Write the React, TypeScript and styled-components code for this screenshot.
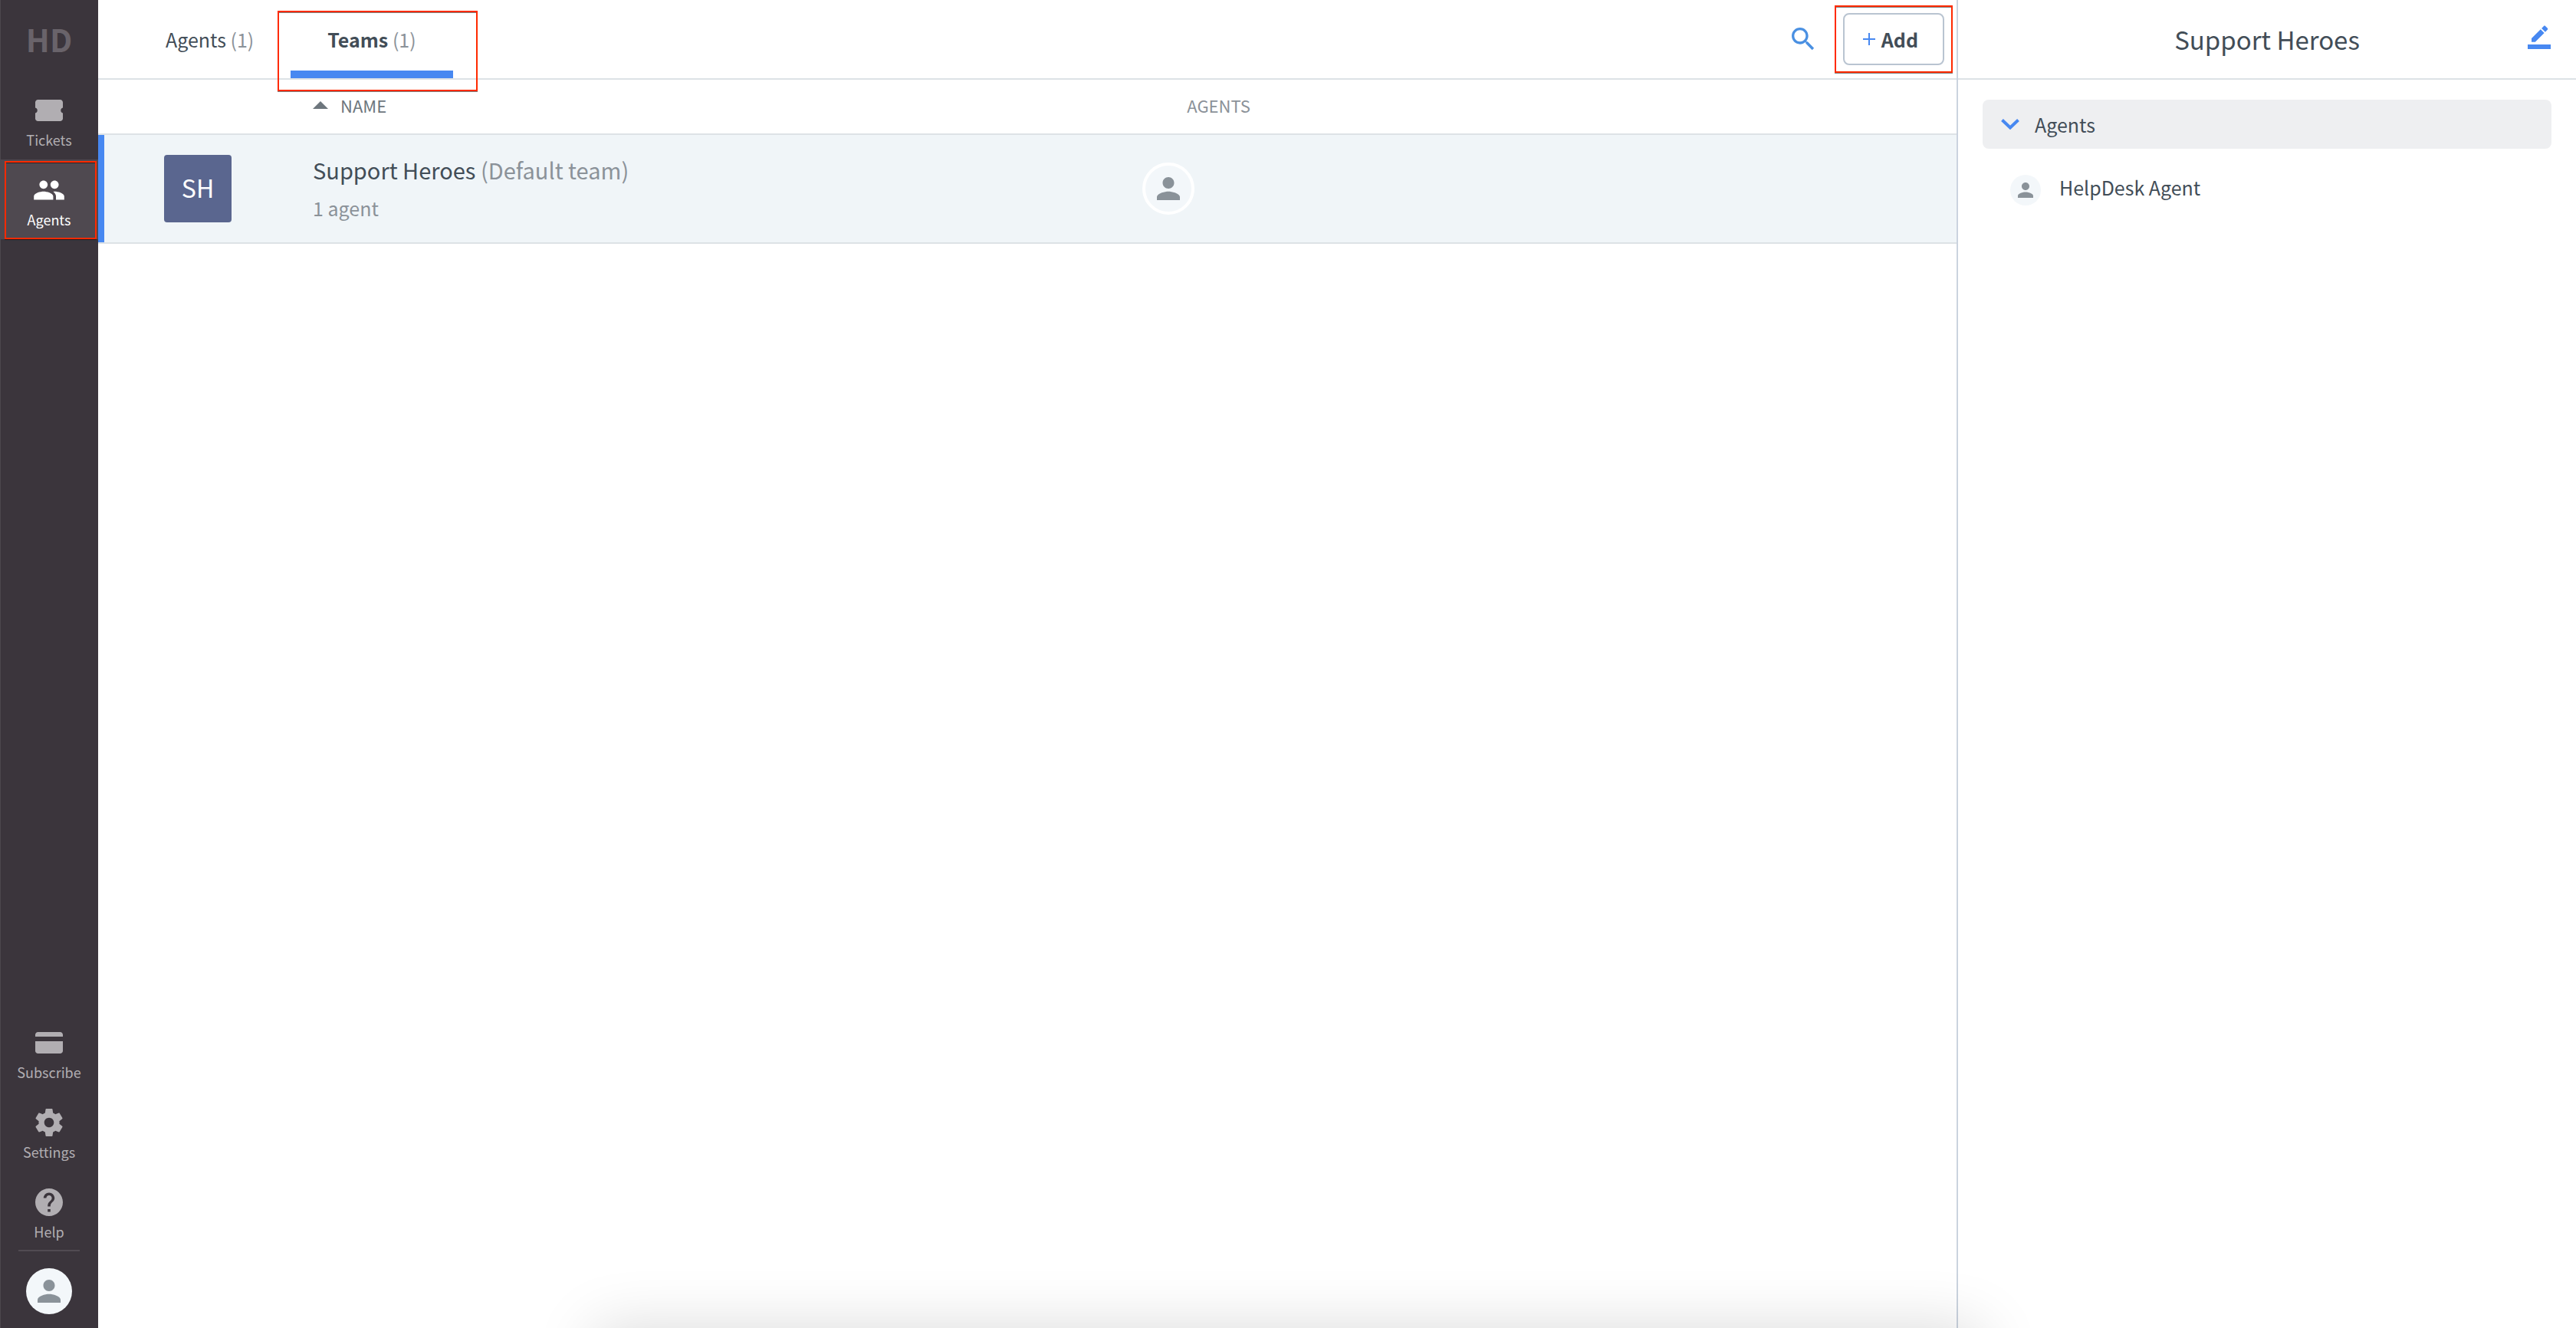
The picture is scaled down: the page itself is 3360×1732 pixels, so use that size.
import React from 'react';
import styled, { createGlobalStyle, css } from 'styled-components';

const color = {
  ink: '#424d57',
  muted: '#8b9299',
  line: '#dde2e6',
  blue: '#4788f1',
  side: '#3b353c',
  sideActive: '#4f4950',
  sideText: '#b1aeb2',
  red: '#ff2a00',
};

const GlobalStyle = createGlobalStyle`
  *, *::before, *::after { box-sizing: border-box; }
  body {
    margin: 0;
    background: #fff;
    color: ${color.ink};
    font-family: "Noto Sans CJK SC", "Noto Sans", sans-serif;
    font-size: 25px;
    line-height: 36px;
  }
  button { border: 0; padding: 0; background: none; font: inherit; color: inherit; cursor: pointer; }
  a { color: inherit; text-decoration: none; }
  svg { display: block; flex: none; }
  h1, p, ul { margin: 0; padding: 0; font-weight: 400; list-style: none; }
`;

const Shell = styled.div`
  display: flex;
  min-height: 100vh;
`;

const Sidebar = styled.nav`
  flex: 0 0 128px;
  display: flex;
  flex-direction: column;
  align-items: stretch;
  background: ${color.side};
  box-shadow: inset 1px 0 0 #4c474d;
  color: ${color.sideText};
`;

const Logo = styled.div`
  height: 104px;
  padding-bottom: 4px;
  display: flex;
  align-items: center;
  justify-content: center;
  color: #69636a;
  font-size: 41px;
  font-weight: 700;
`;

const NavItem = styled.a<{ $active?: boolean }>`
  position: relative;
  display: flex;
  flex-direction: column;
  align-items: center;
  gap: 6px;
  padding: 20px 0 14px;
  font-size: 18px;
  line-height: 24px;
  ${(p) => p.$active && css`
    background: ${color.sideActive};
    color: #fff;
  `}
`;

const Spacer = styled.div`
  flex: 1;
`;

const Divider = styled.hr`
  width: 80px;
  height: 2px;
  margin: -2px auto 22px;
  border: 0;
  background: #514b52;
`;

const Highlight = styled.span<{ $top: number; $right: number; $bottom: number; $left: number }>`
  position: absolute;
  top: ${(p) => p.$top}px;
  right: ${(p) => p.$right}px;
  bottom: ${(p) => p.$bottom}px;
  left: ${(p) => p.$left}px;
  border: 2px solid ${color.red};
  box-shadow: 0 1px 0 rgba(0, 0, 0, 0.5), inset 0 1px 0 rgba(0, 0, 0, 0.5);
  pointer-events: none;
`;

const Avatar = styled.span<{ $size: number; $ring?: boolean }>`
  display: flex;
  align-items: center;
  justify-content: center;
  flex: none;
  width: ${(p) => p.$size}px;
  height: ${(p) => p.$size}px;
  border: ${(p) => (p.$ring ? '4px solid #fff' : '0')};
  border-radius: 50%;
  background: #f3f7fa;
  color: #8a9299;
`;

const AccountButton = styled.button`
  align-self: center;
  margin-bottom: 18px;
`;

const Main = styled.main`
  flex: 1;
  min-width: 0;
`;

const TopBar = styled.header`
  display: flex;
  align-items: stretch;
  height: 104px;
  padding: 0 16px 0 40px;
  border-bottom: 2px solid ${color.line};
`;

const Tab = styled.button<{ $active?: boolean }>`
  position: relative;
  padding: 0 48px;
  font-weight: ${(p) => (p.$active ? 700 : 400)};
  ${(p) => p.$active && css`box-shadow: inset 0 -10px 0 ${color.blue};`}
`;

const Muted = styled.span`
  color: ${color.muted};
  font-weight: 400;
`;

const Actions = styled.div`
  display: flex;
  align-items: center;
  gap: 32px;
  margin-left: auto;
`;

const IconButton = styled.button<{ $color: string }>`
  color: ${(p) => p.$color};
`;

const AddButton = styled.button`
  position: relative;
  display: flex;
  align-items: center;
  gap: 8px;
  height: 68px;
  padding: 0 32px 0 24px;
  border: 2px solid #b9c4d1;
  border-radius: 8px;
  font-weight: 700;
`;

const TeamTable = styled.table`
  width: 100%;
  table-layout: fixed;
  border-collapse: separate;
  border-spacing: 0;
  text-align: left;
`;

const IconCol = styled.col`
  width: 280px;
`;

const AgentsCol = styled.col`
  width: 43.8%;
`;

const HeadCell = styled.th<{ $inset?: boolean }>`
  height: 72px;
  padding: 0 0 4px ${(p) => (p.$inset ? 58 : 0)}px;
  border-bottom: 2px solid ${color.line};
  color: ${(p) => (p.$inset ? color.muted : '#6d767d')};
  font-size: 22px;
  font-weight: 400;
  line-height: 32px;
`;

const SortButton = styled.button`
  display: flex;
  align-items: center;
  gap: 16px;
`;

const Cell = styled.td<{ $marked?: boolean }>`
  height: 142px;
  padding: 0;
  border-bottom: 2px solid ${color.line};
  background: #f0f5f8;
  ${(p) => p.$marked && css`
    padding-left: 86px;
    box-shadow: inset 8px 0 0 ${color.blue};
  `}
`;

const TeamBadge = styled.span`
  display: flex;
  align-items: center;
  justify-content: center;
  width: 88px;
  height: 88px;
  padding-bottom: 4px;
  border-radius: 4px;
  background: #5a668f;
  color: #fff;
  font-size: 32px;
`;

const TeamInfo = styled.div`
  display: grid;
  gap: 4px;
  line-height: 46px;
`;

const TeamName = styled.p`
  font-size: 29px;
`;

const TeamMeta = styled.p`
  color: ${color.muted};
`;

const Panel = styled.aside`
  flex: 0 0 808px;
  border-left: 2px solid #cbd3df;
`;

const PanelHead = styled.header`
  display: grid;
  grid-template-columns: 40px 1fr 40px;
  align-items: center;
  height: 104px;
  padding: 0 28px;
  border-bottom: 2px solid ${color.line};
  text-align: center;
`;

const PanelTitle = styled.h1`
  grid-column: 2;
  font-size: 33px;
  line-height: 48px;
`;

const PanelBody = styled.section`
  padding: 26px 32px;
`;

const SectionToggle = styled.button`
  display: flex;
  align-items: center;
  gap: 20px;
  width: 100%;
  height: 64px;
  padding: 0 24px;
  border-radius: 8px;
  background: #eeeff1;
`;

const AgentItem = styled.li`
  display: flex;
  align-items: center;
  gap: 24px;
  padding: 34px 36px;
`;

const AgentName = styled.span`
  padding-bottom: 8px;
  line-height: 32px;
`;

const DockShadow = styled.div`
  position: fixed;
  top: 100%;
  left: 776px;
  right: 776px;
  height: 200px;
  box-shadow: 0 0 80px rgba(0, 0, 0, 0.15);
  pointer-events: none;
`;

const NavIcon = ({ d }: { d: string }) => (
  <svg width="40" height="40" viewBox="0.889 0.889 22.222 22.222" fill="currentColor" aria-hidden="true">
    <path fillRule="evenodd" d={d} />
  </svg>
);

const PersonIcon = ({ size }: { size: number }) => (
  <svg width={size} height={size} viewBox="4 4 16 16" fill="currentColor" aria-hidden="true">
    <path d="M12 12c2.21 0 4-1.79 4-4s-1.79-4-4-4-4 1.79-4 4 1.79 4 4 4zm0 2c-2.67 0-8 1.34-8 4v2h16v-2c0-2.66-5.33-4-8-4z" />
  </svg>
);

const paths = {
  ticket:
    'M4 4.2h16c1.1 0 2 .9 2 2v3.9a1.95 1.95 0 0 0 0 3.8v3.9c0 1.1-.9 2-2 2H4c-1.1 0-2-.9-2-2v-3.9a1.95 1.95 0 0 0 0-3.8V6.2c0-1.1.9-2 2-2z',
  agents:
    'M16 11c1.66 0 2.99-1.34 2.99-3S17.66 5 16 5s-3 1.34-3 3 1.34 3 3 3zm-8 0c1.66 0 2.99-1.34 2.99-3S9.66 5 8 5 5 6.34 5 8s1.34 3 3 3zm0 2c-2.33 0-7 1.17-7 3.5V19h14v-2.5c0-2.33-4.67-3.5-7-3.5zm8 0c-.29 0-.62.02-.97.05 1.16.84 1.97 1.97 1.97 3.45V19h6v-2.5c0-2.33-4.67-3.5-7-3.5z',
  card:
    'M4 4.2h16c1.1 0 2 .9 2 2v1.3H2V6.2c0-1.1.9-2 2-2zM2 10.9h20v6.9c0 1.1-.9 2-2 2H4c-1.1 0-2-.9-2-2z',
  gear:
    'M19.43 12.98c.04-.32.07-.64.07-.98s-.03-.66-.07-.98l2.11-1.65c.19-.15.24-.42.12-.64l-2-3.46c-.12-.22-.39-.3-.61-.22l-2.49 1c-.52-.4-1.08-.73-1.69-.98l-.38-2.65C14.46 2.18 14.25 2 14 2h-4c-.25 0-.46.18-.49.42l-.38 2.65c-.61.25-1.17.59-1.69.98l-2.49-1c-.23-.09-.49 0-.61.22l-2 3.46c-.13.22-.07.49.12.64l2.11 1.65c-.04.32-.07.65-.07.98s.03.66.07.98l-2.11 1.65c-.19.15-.24.42-.12.64l2 3.46c.12.22.39.3.61.22l2.49-1c.52.4 1.08.73 1.69.98l.38 2.65c.03.24.24.42.49.42h4c.25 0 .46-.18.49-.42l.38-2.65c.61-.25 1.17-.59 1.69-.98l2.49 1c.23.09.49 0 .61-.22l2-3.46c.12-.22.07-.49-.12-.64l-2.11-1.65zM12 15.5c-1.93 0-3.5-1.57-3.5-3.5s1.57-3.5 3.5-3.5 3.5 1.57 3.5 3.5-1.57 3.5-3.5 3.5z',
  help:
    'M12 2C6.48 2 2 6.48 2 12s4.48 10 10 10 10-4.48 10-10S17.52 2 12 2zm1 17h-2v-2h2v2zm2.07-7.75l-.9.92C13.45 12.9 13 13.5 13 15h-2v-.5c0-1.1.45-2.1 1.17-2.83l1.24-1.26c.37-.36.59-.86.59-1.41 0-1.1-.9-2-2-2s-2 .9-2 2H8c0-2.21 1.79-4 4-4s4 1.79 4 4c0 .88-.36 1.68-.93 2.25z',
};

export default function App() {
  return (
    <>
      <GlobalStyle />
      <Shell>
        <Sidebar aria-label="Main">
          <Logo>HD</Logo>
          <NavItem href="#tickets"><NavIcon d={paths.ticket} />Tickets</NavItem>
          <NavItem href="#agents" $active>
            <NavIcon d={paths.agents} />Agents
            <Highlight $top={2} $right={2} $bottom={0} $left={6} />
          </NavItem>
          <Spacer />
          <NavItem href="#subscribe"><NavIcon d={paths.card} />Subscribe</NavItem>
          <NavItem href="#settings"><NavIcon d={paths.gear} />Settings</NavItem>
          <NavItem href="#help"><NavIcon d={paths.help} />Help</NavItem>
          <Divider />
          <AccountButton aria-label="Account">
            <Avatar $size={60}><PersonIcon size={30} /></Avatar>
          </AccountButton>
        </Sidebar>

        <Main>
          <TopBar>
            <Tab>Agents <Muted>(1)</Muted></Tab>
            <Tab $active>
              Teams <Muted>(1)</Muted>
              <Highlight $top={14} $right={-32} $bottom={-17} $left={-17} />
            </Tab>
            <Actions>
              <IconButton $color="#4a90e2" aria-label="Search">
                <svg width="40" height="40" viewBox="0 0 24 24" fill="currentColor" aria-hidden="true">
                  <path d="M15.5 14h-.79l-.28-.27C15.41 12.59 16 11.11 16 9.5 16 5.91 13.09 3 9.5 3S3 5.91 3 9.5 5.91 16 9.5 16c1.61 0 3.09-.59 4.23-1.57l.27.28v.79l5 4.99L20.49 19l-4.99-5zm-6 0C7.01 14 5 11.99 5 9.5S7.01 5 9.5 5 14 7.01 14 9.5 11.99 14 9.5 14z" />
                </svg>
              </IconButton>
              <AddButton>
                <svg width="16" height="16" viewBox="0 0 16 16" fill={color.blue} aria-hidden="true">
                  <path d="M7 0h2v7h7v2H9v7H7V9H0V7h7z" />
                </svg>
                Add
                <Highlight $top={-12} $right={-13} $bottom={-12} $left={-13} />
              </AddButton>
            </Actions>
          </TopBar>

          <TeamTable>
            <colgroup>
              <IconCol />
              <col />
              <AgentsCol />
            </colgroup>
            <thead>
              <tr>
                <HeadCell aria-label="Badge" />
                <HeadCell aria-sort="ascending">
                  <SortButton>
                    <svg width="20" height="10" viewBox="0 0 20 10" fill="currentColor" aria-hidden="true">
                      <path d="M0 10 10 0l10 10z" />
                    </svg>
                    NAME
                  </SortButton>
                </HeadCell>
                <HeadCell $inset>AGENTS</HeadCell>
              </tr>
            </thead>
            <tbody>
              <tr>
                <Cell $marked><TeamBadge>SH</TeamBadge></Cell>
                <Cell>
                  <TeamInfo>
                    <TeamName>Support Heroes <Muted>(Default team)</Muted></TeamName>
                    <TeamMeta>1 agent</TeamMeta>
                  </TeamInfo>
                </Cell>
                <Cell><Avatar $size={68} $ring><PersonIcon size={30} /></Avatar></Cell>
              </tr>
            </tbody>
          </TeamTable>
        </Main>

        <Panel>
          <PanelHead>
            <PanelTitle>Support Heroes</PanelTitle>
            <IconButton $color={color.blue} aria-label="Edit team">
              <svg width="40" height="36" viewBox="0 0 40 36" fill="currentColor" aria-hidden="true">
                <path d="M10 17 21.800 5.200 26.600 10 14.800 21.700H10zM23.100 3.900 26 1c.6-.6 1.400-.6 2 0l2.800 2.800c.6.6.6 1.400 0 2L27.900 8.700zM5 25h30v6H5z" />
              </svg>
            </IconButton>
          </PanelHead>
          <PanelBody>
            <SectionToggle aria-expanded="true">
              <svg width="24" height="14" viewBox="0 0 24 14" fill="none" stroke={color.blue} strokeWidth="4" aria-hidden="true">
                <path d="M1.500 1.500 12 11.500 22.500 1.500" />
              </svg>
              Agents
            </SectionToggle>
            <ul>
              <AgentItem>
                <Avatar $size={40}><PersonIcon size={20} /></Avatar>
                <AgentName>HelpDesk Agent</AgentName>
              </AgentItem>
            </ul>
          </PanelBody>
        </Panel>
      </Shell>
      <DockShadow />
    </>
  );
}
